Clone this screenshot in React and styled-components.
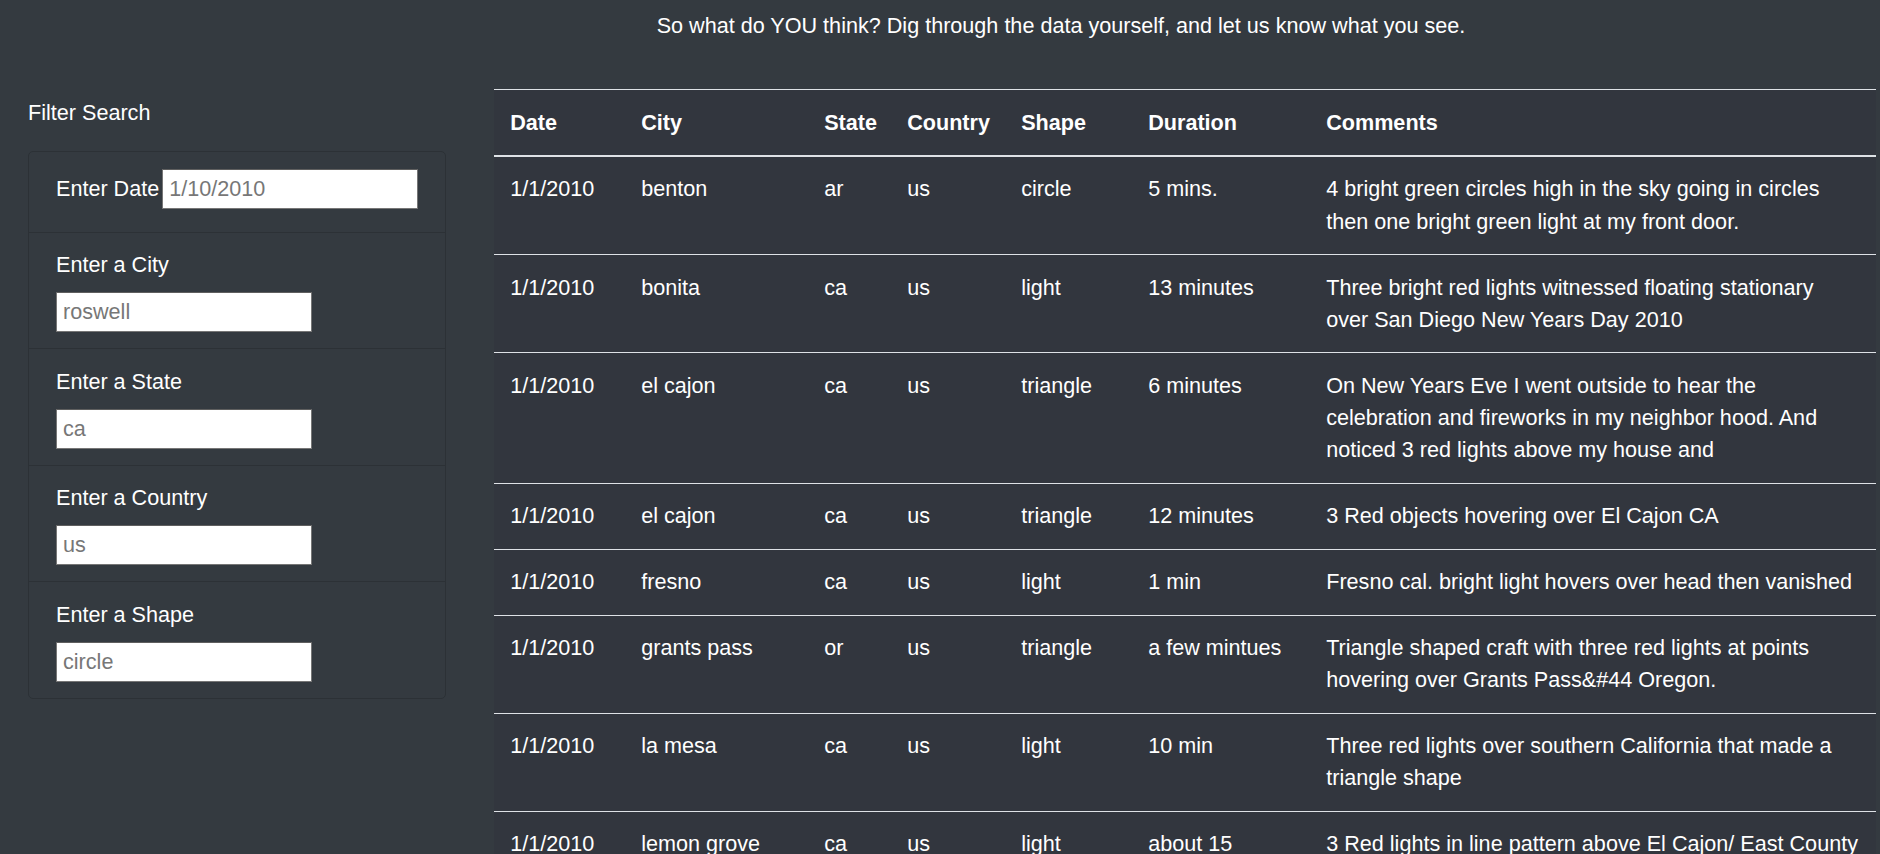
import React from 'react';
import styled, { createGlobalStyle } from 'styled-components';

const GlobalStyle = createGlobalStyle`
    html, body {
        margin: 0;
        padding: 0;
        background: #343a40;
        overflow: hidden;
    }
    body {
        font-family: "Liberation Sans", Arial, sans-serif;
        font-size: 21.6px;
        line-height: 1.5;
        color: #fff;
    }
`

const Intro = styled.p`
    margin: 0;
    padding: 10px 0 0 242px;
    text-align: center;
`
const Layout = styled.div`
    display: grid;
    grid-template-columns: 418px 1fr;
    column-gap: 48px;
    align-items: start;
    margin-top: 47px;
    padding: 0 4px 0 28px;
`
const Sidebar = styled.aside`
    display: flex;
    flex-direction: column;
`
const SideTitle = styled.div`
    margin: 8px 0 21.6px;
`
const FilterList = styled.ul`
    list-style: none;
    margin: 0;
    padding: 0;
    border: 1px solid #2c3136;
    border-radius: 5px;
`
const FilterItem = styled.li`
    padding: 16.2px 27px;
    & + & {
        border-top: 1px solid #2c3136;
    }
`
const InlineRow = styled.div`
    display: flex;
    align-items: baseline;
    gap: 3px;
    height: 47px;
`
const Label = styled.label`
    display: ${p => (p.$inline ? 'inline' : 'block')};
    margin-bottom: ${p => (p.$inline ? '0' : '10.8px')};
    white-space: nowrap;
    flex-shrink: 0;
`
const Input = styled.input`
    box-sizing: border-box;
    width: 256px;
    height: 40px;
    padding: 0 6px;
    border: 1px solid #767676;
    border-top-color: #5f5f5f;
    border-radius: 0;
    background: #fff;
    font-family: inherit;
    font-size: 21.6px;
    color: #495057;
    outline: none;
    &::placeholder {
        color: #777;
        opacity: 1;
    }
`
const Table = styled.table`
    width: 100%;
    border-collapse: collapse;
    table-layout: fixed;
    background: #32363e;
`
const Col = styled.col`
    width: ${p => (p.$w ? p.$w + 'px' : 'auto')};
`
const Th = styled.th`
    padding: 16.2px;
    text-align: left;
    vertical-align: bottom;
    font-weight: 700;
    white-space: nowrap;
    border-top: 1px solid #dee2e6;
    border-bottom: 2px solid #dee2e6;
`
const Td = styled.td`
    padding: 16.2px;
    vertical-align: top;
    border-top: 1px solid #dee2e6;
`

const filters = [
    { label: 'Enter a City', placeholder: 'roswell' },
    { label: 'Enter a State', placeholder: 'ca' },
    { label: 'Enter a Country', placeholder: 'us' },
    { label: 'Enter a Shape', placeholder: 'circle' },
]

const columns = [
    { title: 'Date', w: 131 },
    { title: 'City', w: 183 },
    { title: 'State', w: 83 },
    { title: 'Country', w: 114 },
    { title: 'Shape', w: 127 },
    { title: 'Duration', w: 178 },
    { title: 'Comments' },
]

const sightings = [
    ['1/1/2010', 'benton', 'ar', 'us', 'circle', '5 mins.', '4 bright green circles high in the sky going in circles then one bright green light at my front door.'],
    ['1/1/2010', 'bonita', 'ca', 'us', 'light', '13 minutes', 'Three bright red lights witnessed floating stationary over San Diego New Years Day 2010'],
    ['1/1/2010', 'el cajon', 'ca', 'us', 'triangle', '6 minutes', 'On New Years Eve I went outside to hear the celebration and fireworks in my neighbor hood. And noticed 3 red lights above my house and'],
    ['1/1/2010', 'el cajon', 'ca', 'us', 'triangle', '12 minutes', '3 Red objects hovering over El Cajon CA'],
    ['1/1/2010', 'fresno', 'ca', 'us', 'light', '1 min', 'Fresno cal. bright light hovers over head then vanished'],
    ['1/1/2010', 'grants pass', 'or', 'us', 'triangle', 'a few mintues', 'Triangle shaped craft with three red lights at points hovering over Grants Pass&#44 Oregon.'],
    ['1/1/2010', 'la mesa', 'ca', 'us', 'light', '10 min', 'Three red lights over southern California that made a triangle shape'],
    ['1/1/2010', 'lemon grove', 'ca', 'us', 'light', 'about 15 minutes', '3 Red lights in line pattern above El Cajon/ East County San Diego'],
    ['1/1/2010', 'lemon grove', 'ca', 'us', 'light', '10 minutes', 'Two red lights moving slowly across the sky'],
]

const App = () => {
    return (
        <>
            <GlobalStyle />
            <Intro>So what do YOU think? Dig through the data yourself, and let us know what you see.</Intro>
            <Layout>
                <Sidebar>
                    <SideTitle>Filter Search</SideTitle>
                    <FilterList>
                        <FilterItem>
                            <InlineRow>
                                <Label $inline htmlFor="datetime">Enter Date</Label>
                                <Input id="datetime" type="text" placeholder="1/10/2010" />
                            </InlineRow>
                        </FilterItem>
                        {filters.map(f => (
                            <FilterItem key={f.label}>
                                <Label>{f.label}</Label>
                                <Input type="text" placeholder={f.placeholder} />
                            </FilterItem>
                        ))}
                    </FilterList>
                </Sidebar>
                <Table>
                    <colgroup>
                        {columns.map(c => <Col key={c.title} $w={c.w} />)}
                    </colgroup>
                    <thead>
                        <tr>
                            {columns.map(c => <Th key={c.title}>{c.title}</Th>)}
                        </tr>
                    </thead>
                    <tbody>
                        {sightings.map((row, i) => (
                            <tr key={i}>
                                {row.map((cell, j) => <Td key={j}>{cell}</Td>)}
                            </tr>
                        ))}
                    </tbody>
                </Table>
            </Layout>
        </>
    );
};

export default App;
